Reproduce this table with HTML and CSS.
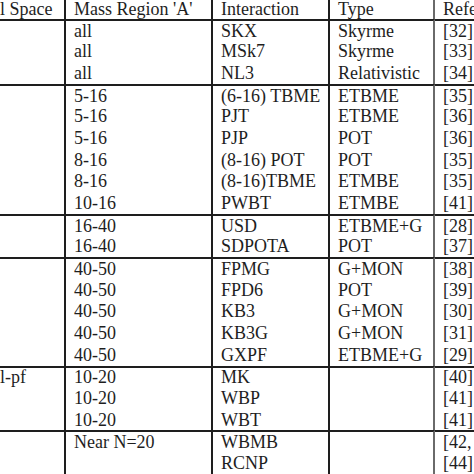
FILE: index.html
```html
<!DOCTYPE html>
<html>
<head>
<meta charset="utf-8">
<link rel="stylesheet" href="styles.css">
</head>
<body>
<div class="page">
<table class="tbl">
<colgroup>
<col class="c1"><col class="c2"><col class="c3"><col class="c4"><col class="c5">
</colgroup>
<thead>
<tr class="head"><th>l Space</th><th>Mass Region 'A'</th><th>Interaction</th><th>Type</th><th>Reference</th></tr>
</thead>
<tbody>
<tr><td></td><td>all</td><td>SKX</td><td>Skyrme</td><td>[32]</td></tr>
<tr><td></td><td>all</td><td>MSk7</td><td>Skyrme</td><td>[33]</td></tr>
<tr><td></td><td>all</td><td>NL3</td><td>Relativistic</td><td>[34]</td></tr>
</tbody>
<tbody>
<tr><td></td><td>5-16</td><td>(6-16) TBME</td><td>ETBME</td><td>[35]</td></tr>
<tr><td></td><td>5-16</td><td>PJT</td><td>ETBME</td><td>[36]</td></tr>
<tr><td></td><td>5-16</td><td>PJP</td><td>POT</td><td>[36]</td></tr>
<tr><td></td><td>8-16</td><td>(8-16) POT</td><td>POT</td><td>[35]</td></tr>
<tr><td></td><td>8-16</td><td>(8-16)TBME</td><td>ETMBE</td><td>[35]</td></tr>
<tr><td></td><td>10-16</td><td>PWBT</td><td>ETMBE</td><td>[41]</td></tr>
</tbody>
<tbody>
<tr><td></td><td>16-40</td><td>USD</td><td>ETBME+G</td><td>[28]</td></tr>
<tr><td></td><td>16-40</td><td>SDPOTA</td><td>POT</td><td>[37]</td></tr>
</tbody>
<tbody>
<tr><td></td><td>40-50</td><td>FPMG</td><td>G+MON</td><td>[38]</td></tr>
<tr><td></td><td>40-50</td><td>FPD6</td><td>POT</td><td>[39]</td></tr>
<tr><td></td><td>40-50</td><td>KB3</td><td>G+MON</td><td>[30]</td></tr>
<tr><td></td><td>40-50</td><td>KB3G</td><td>G+MON</td><td>[31]</td></tr>
<tr><td></td><td>40-50</td><td>GXPF</td><td>ETBME+G</td><td>[29]</td></tr>
</tbody>
<tbody>
<tr><td>l-pf</td><td>10-20</td><td>MK</td><td></td><td>[40]</td></tr>
<tr><td></td><td>10-20</td><td>WBP</td><td></td><td>[41]</td></tr>
<tr><td></td><td>10-20</td><td>WBT</td><td></td><td>[41]</td></tr>
</tbody>
<tbody>
<tr><td></td><td>Near N=20</td><td>WBMB</td><td></td><td>[42,</td></tr>
<tr><td></td><td></td><td>RCNP</td><td></td><td>[44]</td></tr>
</tbody>
</table>
</div>
</body>
</html>
```
FILE: styles.css
```css
html, body {
  margin: 0;
  padding: 0;
  background: #ffffff;
}
.page {
  width: 474px;
  height: 474px;
  overflow: hidden;
  background: #ffffff;
}
.tbl {
  border-collapse: separate;
  border-spacing: 0;
  table-layout: fixed;
  width: 534px;
  font-family: "Liberation Serif", "Times New Roman", serif;
  font-size: 18px;
  color: #1e1e1e;
}
.c1 { width: 66px; }
.c2 { width: 147px; }
.c3 { width: 117px; }
.c4 { width: 105px; }
.c5 { width: 99px; }

.tbl th, .tbl td {
  padding: 0 0 0 8px;
  text-align: left;
  font-weight: normal;
  white-space: nowrap;
  line-height: 18px;
  vertical-align: middle;
}
.tbl th:first-child, .tbl td:first-child {
  padding-left: 0;
}
.tbl th:nth-child(1), .tbl td:nth-child(1),
.tbl th:nth-child(2), .tbl td:nth-child(2),
.tbl th:nth-child(3), .tbl td:nth-child(3) {
  border-right: 2px solid #1e1e1e;
}
.tbl th:nth-child(4), .tbl td:nth-child(4) {
  border-right: 2px solid #6a6a6a;
}
.head {
  height: 19px;
}
.head th {
  vertical-align: top;
  line-height: 18px;
  padding-top: 0;
}
.tbl tbody tr {
  height: 21.67px;
}
.tbl tbody tr:first-child td {
  border-top: 2px solid #1e1e1e;
}
```
